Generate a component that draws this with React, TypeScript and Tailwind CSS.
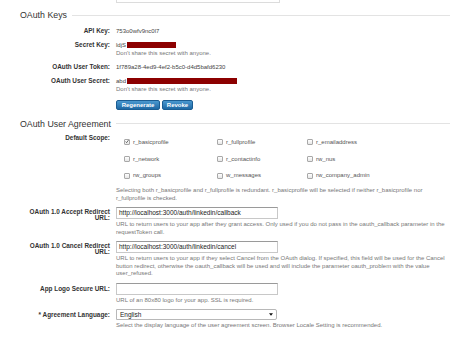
import type { ReactNode } from "react";

const SCOPES = [
  { name: "r_basicprofile", checked: true },
  { name: "r_fullprofile", checked: false },
  { name: "r_emailaddress", checked: false },
  { name: "r_network", checked: false },
  { name: "r_contactinfo", checked: false },
  { name: "rw_nus", checked: false },
  { name: "rw_groups", checked: false },
  { name: "w_messages", checked: false },
  { name: "rw_company_admin", checked: false },
];

function Heading({ title }: { title: string }) {
  return (
    <div className="flex items-center h-[12px] w-[430px]">
      <span className="text-[8.8px] leading-[12px] text-[#333] whitespace-nowrap">{title}</span>
      <div className="flex-1 ml-[5px] border-t border-[#e3e3e3]" />
    </div>
  );
}

function Row({
  label,
  children,
  className = "",
  labelClass = "",
}: {
  label: ReactNode;
  children: ReactNode;
  className?: string;
  labelClass?: string;
}) {
  return (
    <div className={`flex ${className}`}>
      <div
        className={`w-[96px] shrink-0 pr-[6px] text-right font-bold text-[6.4px] text-[#333] ${labelClass}`}
      >
        {label}
      </div>
      <div className="w-[336px]">{children}</div>
    </div>
  );
}

function Hint({ children, className = "" }: { children: ReactNode; className?: string }) {
  return <div className={`text-[6px] leading-[7.6px] text-[#777] ${className}`}>{children}</div>;
}

function TextInput({ value = "" }: { value?: string }) {
  return (
    <div className="w-[162px] h-[11.5px] border border-[#c8c8c8] border-t-[#9a9a9a] bg-white px-[2px] text-[6.5px] leading-[9.5px] text-[#222] whitespace-nowrap overflow-hidden">
      {value}
    </div>
  );
}

function Checkbox({ checked }: { checked: boolean }) {
  return (
    <div className="w-[6px] h-[6px] border border-[#a8a8a8] rounded-[1px] bg-gradient-to-b from-white to-[#e6e6e6] flex items-center justify-center">
      {checked && (
        <svg viewBox="0 0 10 10" className="w-[7px] h-[7px] -mt-[1px]">
          <path d="M1.5 5.2 L4 7.8 L8.8 1.5" stroke="#333" strokeWidth="1.8" fill="none" />
        </svg>
      )}
    </div>
  );
}

function Button({ children, className = "" }: { children: ReactNode; className?: string }) {
  return (
    <div
      className={`h-[10.5px] flex items-center justify-center rounded-[2px] border border-[#1b5d93] bg-gradient-to-b from-[#4a98cf] to-[#1e69a5] text-white font-bold text-[6px] ${className}`}
    >
      {children}
    </div>
  );
}

export default function App() {
  return (
    <div
      className="w-[474px] h-[348px] bg-white overflow-hidden pl-[20px]"
      style={{ fontFamily: '"Liberation Sans", Arial, sans-serif' }}
    >
      <div className="ml-[96px] w-[164px] h-[3px] border-x border-b border-[#dcdcdc]" />

      {/* OAuth Keys */}
      <div className="mt-[6px]">
        <Heading title="OAuth Keys" />
      </div>

      <Row label="API Key:" className="mt-[5.7px] leading-[8px]">
        <div className="text-[6px] leading-[8px] text-[#444]">753o0wfv9nc0l7</div>
      </Row>

      <Row label="Secret Key:" className="mt-[6.3px] leading-[8px]">
        <div className="flex items-center h-[8px] text-[6px] text-[#444]">
          ldjS
          <span className="inline-block w-[49px] h-[6px] bg-[#8c0000] ml-[1px]" />
        </div>
        <Hint className="mt-[1px]">Don't share this secret with anyone.</Hint>
      </Row>

      <Row label="OAuth User Token:" className="mt-[5px] leading-[8px]">
        <div className="text-[6px] leading-[8px] text-[#444]">1f789a28-4ed9-4ef2-b5c0-d4d5bafd6230</div>
      </Row>

      <Row label="OAuth User Secret:" className="mt-[6px] leading-[8px]">
        <div className="flex items-center h-[8px] text-[6px] text-[#444]">
          abd
          <span className="inline-block w-[110px] h-[6px] bg-[#8c0000] ml-[1px]" />
        </div>
        <Hint className="mt-[1.7px]">Don't share this secret with anyone.</Hint>
        <div className="flex gap-[2px] mt-[6px]">
          <Button className="w-[44px]">Regenerate</Button>
          <Button className="w-[31px]">Revoke</Button>
        </div>
      </Row>

      {/* OAuth User Agreement */}
      <div className="mt-[7.3px]">
        <Heading title="OAuth User Agreement" />
      </div>

      <Row label="Default Scope:" className="mt-[4.8px]" labelClass="leading-[8px]">
        <div className="grid grid-cols-[93px_90px_1fr] gap-y-[8.7px] pt-[4px] pl-[7.5px]">
          {SCOPES.map((s) => (
            <div key={s.name} className="flex items-center gap-[3.5px] h-[8px]">
              <Checkbox checked={s.checked} />
              <span className="text-[6px] text-[#555]">{s.name}</span>
            </div>
          ))}
        </div>
        <Hint className="mt-[7.3px]">
          Selecting both r_basicprofile and r_fullprofile is redundant. r_basicprofile will be selected if neither
          r_basicprofile nor r_fullprofile is checked.
        </Hint>
      </Row>

      <Row
        label="OAuth 1.0 Accept Redirect URL:"
        className="mt-[4.8px]"
        labelClass="leading-[6.6px] pt-[1.5px]"
      >
        <TextInput value="http://localhost:3000/auth/linkedin/callback" />
        <Hint className="mt-[2.5px]">
          URL to return users to your app after they grant access. Only used if you do not pass in the
          oauth_callback parameter in the requestToken call.
        </Hint>
      </Row>

      <Row
        label="OAuth 1.0 Cancel Redirect URL:"
        className="mt-[5px]"
        labelClass="leading-[6.6px] pt-[1.5px]"
      >
        <TextInput value="http://localhost:3000/auth/linkedin/cancel" />
        <Hint className="mt-[2.5px]">
          URL to return users to your app if they select Cancel from the OAuth dialog. If specified, this field
          will be used for the Cancel button redirect, otherwise the oauth_callback will be used and will include
          the parameter oauth_problem with the value user_refused.
        </Hint>
      </Row>

      <Row label="App Logo Secure URL:" className="mt-[5px]" labelClass="leading-[11.5px]">
        <TextInput />
        <Hint className="mt-[2.5px]">URL of an 80x80 logo for your app. SSL is required.</Hint>
      </Row>

      <Row label="* Agreement Language:" className="mt-[4.5px]" labelClass="leading-[11px]">
        <div className="w-[161px] h-[11px] border border-[#b8b8b8] rounded-r-[2px] bg-white flex items-center justify-between pl-[3px] pr-[3px]">
          <span className="text-[6.5px] text-[#222]">English</span>
          <svg viewBox="0 0 6 4" className="w-[4px] h-[3px]">
            <path d="M0 0 H6 L3 4 Z" fill="#111" />
          </svg>
        </div>
        <Hint className="mt-[2px]">
          Select the display language of the user agreement screen. Browser Locale Setting is recommended.
        </Hint>
      </Row>
    </div>
  );
}
